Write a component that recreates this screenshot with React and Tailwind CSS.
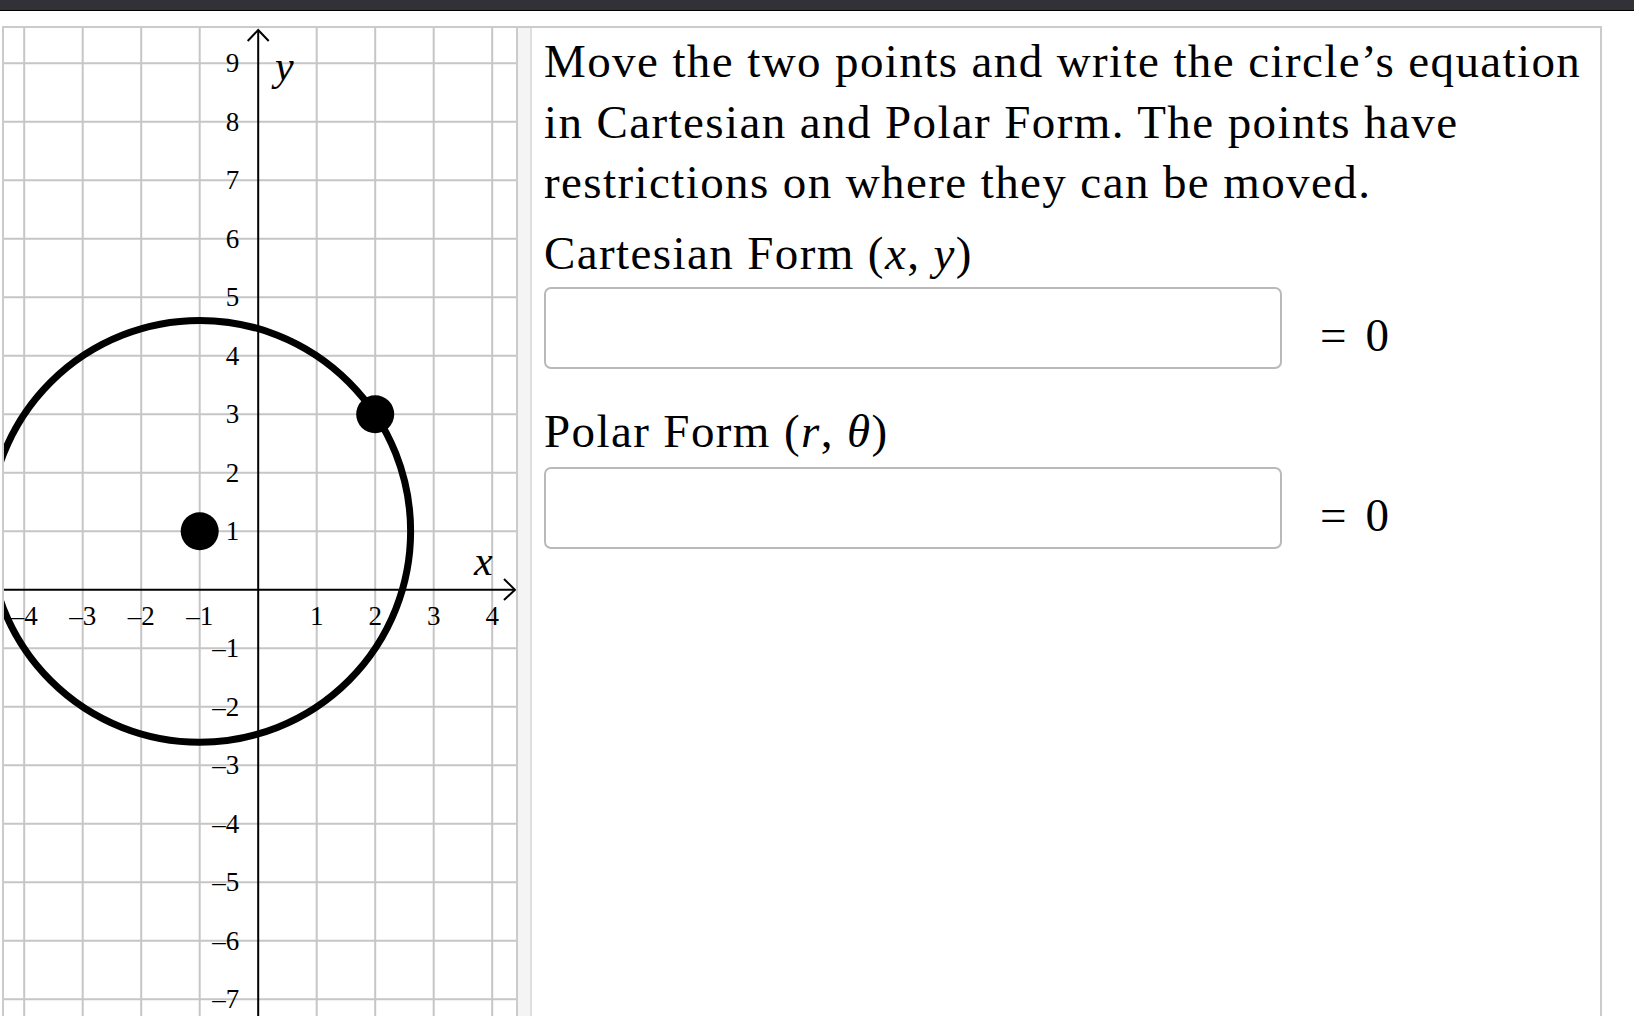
import React from "react";

// board geometry, in page pixels
var OX = 258.2, OY = 589.8, U = 58.5;
function px(x){ return OX + x * U; }
function py(y){ return OY - y * U; }

var XS = [-4, -3, -2, -1, 1, 2, 3, 4];
var YS = [9, 8, 7, 6, 5, 4, 3, 2, 1, -1, -2, -3, -4, -5, -6, -7];
var CENTER = { x: -1, y: 1 };
var EDGE = { x: 2, y: 3 };

function num(n){ return n < 0 ? "\u2013" + (-n) : "" + n; }

function Board(){
  var r = Math.sqrt(Math.pow(EDGE.x - CENTER.x, 2) + Math.pow(EDGE.y - CENTER.y, 2)) * U;
  return (
    <svg width="512" height="990" viewBox="4 28 512 990" className="block">
      {XS.map(function(i){
        return <line key={"v" + i} x1={px(i)} y1="0" x2={px(i)} y2="1100" stroke="#c6c6c6" strokeWidth="2" />;
      })}
      {YS.concat([-8]).map(function(j){
        return <line key={"h" + j} x1="0" y1={py(j)} x2="520" y2={py(j)} stroke="#c6c6c6" strokeWidth="2" />;
      })}
      <line x1="0" y1={OY} x2="514" y2={OY} stroke="#000" strokeWidth="2" />
      <polyline points={"504,579 515," + OY + " 504,600"} fill="none" stroke="#000" strokeWidth="2" />
      <line x1={OX} y1="31" x2={OX} y2="1100" stroke="#000" strokeWidth="2" />
      <polyline points={(OX - 10.5) + ",41 " + OX + ",30 " + (OX + 10.5) + ",41"} fill="none" stroke="#000" strokeWidth="2" />
      <g fontFamily="'Liberation Serif', serif" fontSize="27" fill="#000">
        {XS.map(function(i){
          return <text key={"xl" + i} x={px(i)} y={OY + 35} textAnchor="middle">{num(i)}</text>;
        })}
        {YS.map(function(j){
          return <text key={"yl" + j} x={OX - 19} y={py(j) + 9} textAnchor="end">{num(j)}</text>;
        })}
      </g>
      <g fontFamily="'Liberation Serif', serif" fontStyle="italic" fontSize="42" fill="#000">
        <text x="474" y="575">x</text>
        <text x="275" y="80">y</text>
      </g>
      <circle cx={px(CENTER.x)} cy={py(CENTER.y)} r={r} fill="none" stroke="#000" strokeWidth="7" />
      <circle cx={px(CENTER.x)} cy={py(CENTER.y)} r="19" fill="#000" />
      <circle cx={px(EDGE.x)} cy={py(EDGE.y)} r="19" fill="#000" />
    </svg>
  );
}

function Answer(p){
  return (
    <div className="flex items-start">
      <div className="w-[738px] h-[82px] rounded-[7px] border-2 border-[#b9b9bc] bg-white shrink-0" aria-label={p.label} />
      <div className="flex pl-[38px] pt-[18px] tracking-normal">
        <span>=</span>
        <span className="ml-[19px]">0</span>
      </div>
    </div>
  );
}

export default function App(){
  return (
    <div className="h-[1016px] overflow-hidden bg-white">
      <div className="h-[11px] bg-[#323137] border-b border-black" />
      <div className="flex pt-[15px] pl-[2px] pr-[32px] h-[1005px]">
        <div className="w-[516px] shrink-0 border-t-2 border-x-2 border-[#cbcbcb] overflow-hidden">
          <Board />
        </div>
        <div className="flex flex-1 border-t-2 border-r-2 border-[#cbcbcb]">
          <div className="w-[14px] shrink-0 bg-[#f4f4f4] border-r-2 border-[#dedede]" />
          <div className="flex-1 pl-[12px] pt-[3px] text-[47px] leading-[60.5px] tracking-[1.4px] text-black" style={{ fontFamily: "'Liberation Serif', serif" }}>
            <p>
              Move the two points and write the circle’s equation<br />
              in Cartesian and Polar Form. The points have<br />
              restrictions on where they can be moved.
            </p>
            <p className="mt-[10px]">Cartesian Form (<i>x</i>, <i>y</i>)</p>
            <div className="mt-[4px]"><Answer label="Cartesian form" /></div>
            <p className="mt-[32px]">Polar Form (<i>r</i>, <i>θ</i>)</p>
            <div className="mt-[5px]"><Answer label="Polar form" /></div>
          </div>
        </div>
      </div>
    </div>
  );
}
